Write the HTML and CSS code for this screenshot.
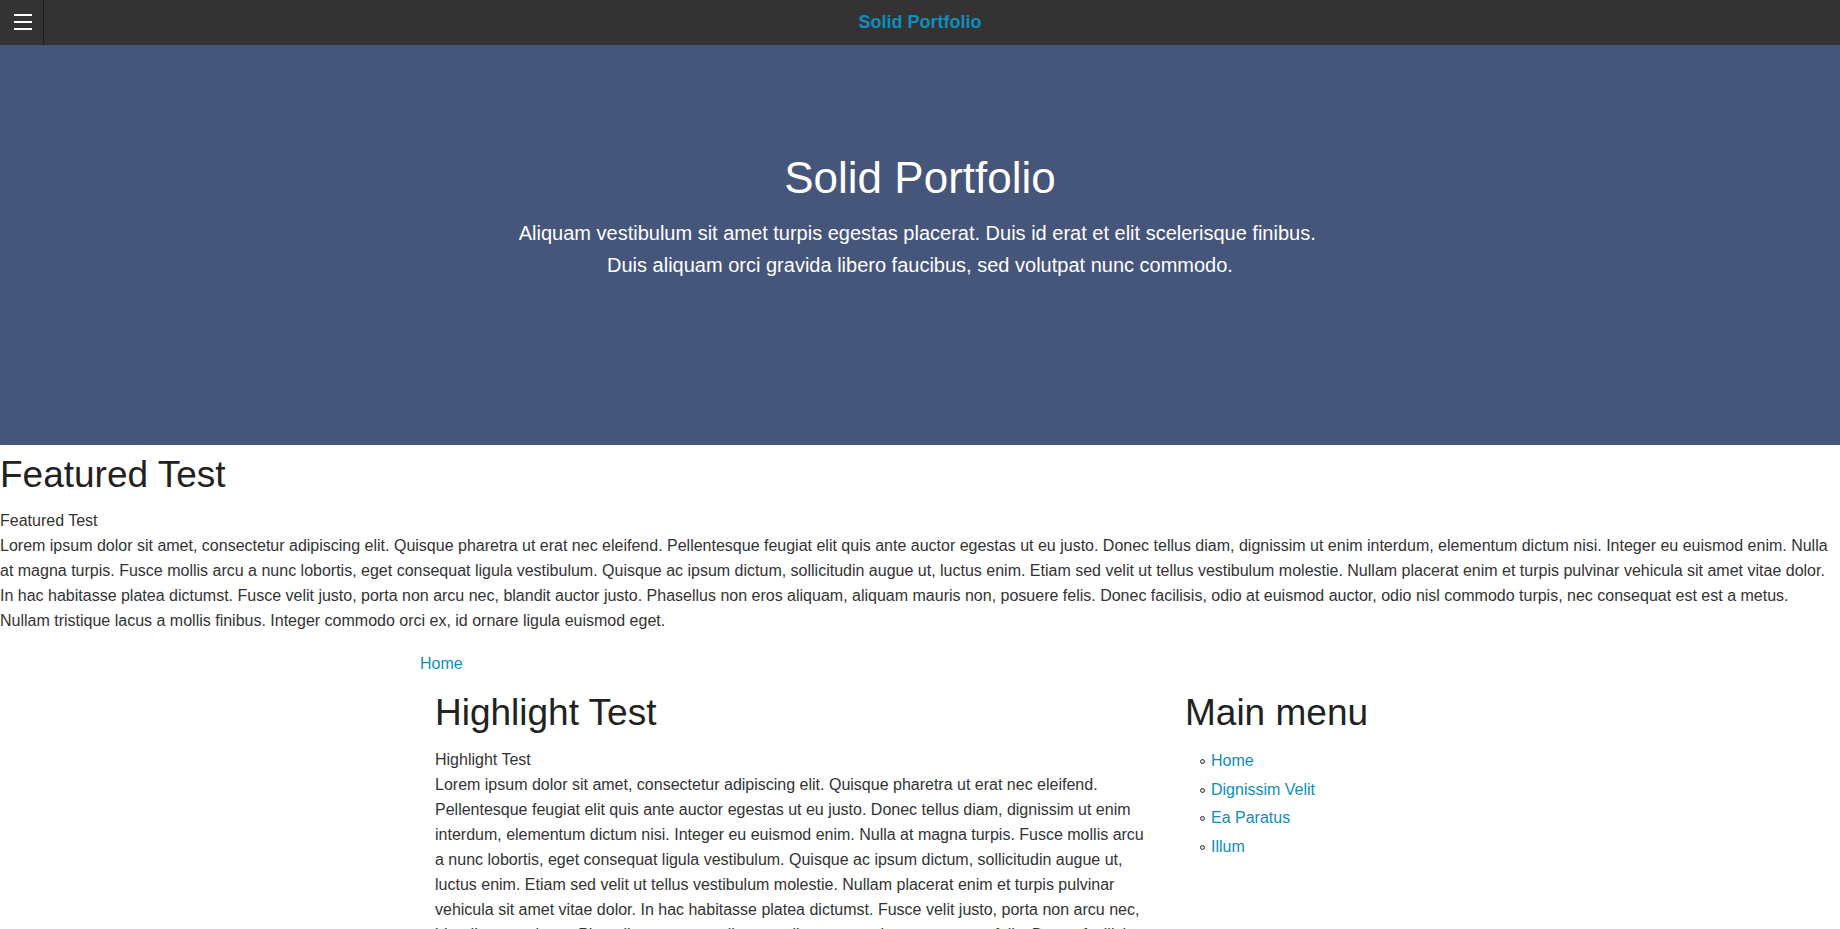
FILE: index.html
```html
<!DOCTYPE html>
<html lang="en">
<head>
<meta charset="utf-8">
<title>Solid Portfolio</title>
<link rel="stylesheet" href="styles.css">
</head>
<body>
<header class="topbar">
  <button class="menu-toggle" aria-label="Menu">
    <span class="bar"></span><span class="bar"></span><span class="bar"></span>
  </button>
  <a class="site-name" href="#">Solid Portfolio</a>
  <span class="spacer"></span>
</header>

<section class="hero">
  <h1 class="hero-title">Solid Portfolio</h1>
  <p class="hero-text">Aliquam vestibulum sit amet turpis egestas placerat. Duis id erat et elit scelerisque finibus.&nbsp;<br>Duis aliquam orci gravida libero faucibus, sed volutpat nunc commodo.</p>
</section>

<section class="featured">
  <h2 class="block-title featured-title">Featured Test</h2>
  <div class="field">Featured Test</div>
  <p class="body-text">Lorem ipsum dolor sit amet, consectetur adipiscing elit. Quisque pharetra ut erat nec eleifend. Pellentesque feugiat elit quis ante auctor egestas ut eu justo. Donec tellus diam, dignissim ut enim interdum, elementum dictum nisi. Integer eu euismod enim. Nulla at magna turpis. Fusce mollis arcu a nunc lobortis, eget consequat ligula vestibulum. Quisque ac ipsum dictum, sollicitudin augue ut, luctus enim. Etiam sed velit ut tellus vestibulum molestie. Nullam placerat enim et turpis pulvinar vehicula sit amet vitae dolor. In hac habitasse platea dictumst. Fusce velit justo, porta non arcu nec, blandit auctor justo. Phasellus non eros aliquam, aliquam mauris non, posuere felis. Donec facilisis, odio at euismod auctor, odio nisl commodo turpis, nec consequat est est a metus. Nullam tristique lacus a mollis finibus. Integer commodo orci ex, id ornare ligula euismod eget.</p>
</section>

<div class="container">
  <nav class="breadcrumb"><a href="#">Home</a></nav>
  <div class="layout">
    <main class="main-col">
      <h2 class="block-title col-title">Highlight Test</h2>
      <div class="field">Highlight Test</div>
      <p class="body-text">Lorem ipsum dolor sit amet, consectetur adipiscing elit. Quisque pharetra ut erat nec eleifend. Pellentesque feugiat elit quis ante auctor egestas ut eu justo. Donec tellus diam, dignissim ut enim interdum, elementum dictum nisi. Integer eu euismod enim. Nulla at magna turpis. Fusce mollis arcu a nunc lobortis, eget consequat ligula vestibulum. Quisque ac ipsum dictum, sollicitudin augue ut, luctus enim. Etiam sed velit ut tellus vestibulum molestie. Nullam placerat enim et turpis pulvinar vehicula sit amet vitae dolor. In hac habitasse platea dictumst. Fusce velit justo, porta non arcu nec, blandit auctor justo. Phasellus non eros aliquam, aliquam mauris non, posuere felis. Donec facilisis, odio at euismod auctor, odio nisl commodo turpis, nec consequat est est a metus. Nullam tristique lacus a mollis finibus. Integer commodo orci ex, id ornare ligula euismod eget.</p>
    </main>
    <aside class="side-col">
      <h2 class="block-title col-title">Main menu</h2>
      <ul class="menu">
        <li><a href="#">Home</a></li>
        <li><a href="#">Dignissim Velit</a></li>
        <li><a href="#">Ea Paratus</a></li>
        <li><a href="#">Illum</a></li>
      </ul>
    </aside>
  </div>
</div>
</body>
</html>
```

FILE: styles.css
```css
html, body {
  margin: 0;
  padding: 0;
}
body {
  font-family: "Liberation Sans", Arial, sans-serif;
  font-size: 16px;
  line-height: 25px;
  color: #333;
  background: #fff;
}
a {
  color: #0d8ebf;
  text-decoration: none;
}

/* top bar */
.topbar {
  display: grid;
  grid-template-columns: 44px 1fr 44px;
  align-items: center;
  height: 45px;
  background: #333333;
}
.menu-toggle {
  width: 44px;
  height: 45px;
  margin: 0;
  padding: 14px 12px 0 14px;
  border: 0;
  border-right: 1px solid #1c1c1c;
  background: transparent;
  display: flex;
  flex-direction: column;
  gap: 5px;
  align-items: flex-start;
  box-sizing: border-box;
  cursor: pointer;
}
.menu-toggle .bar {
  display: block;
  width: 18px;
  height: 2px;
  background: #fff;
}
.site-name {
  justify-self: center;
  font-size: 18px;
  font-weight: bold;
  line-height: 20px;
  margin-top: -1px;
  color: #0d8ebf;
}

/* hero */
.hero {
  height: 400px;
  box-sizing: border-box;
  padding-top: 107px;
  background: #46557a;
  color: #fff;
  text-align: center;
}
.hero-title {
  margin: 0;
  font-size: 44px;
  font-weight: normal;
  line-height: 52px;
}
.hero-text {
  margin: 13px 0 0;
  font-size: 20px;
  line-height: 32px;
}

/* blocks */
.block-title {
  font-size: 37px;
  font-weight: normal;
  line-height: 43px;
  color: #222;
  margin: 0 0 13px;
}
.featured-title {
  margin-top: 8px;
  margin-bottom: 12px;
}
.field {
  line-height: 25px;
}
.body-text {
  margin: 0;
}

.container {
  width: 1000px;
  margin: 18px auto 0;
}
.breadcrumb {
  line-height: 25px;
}
.layout {
  display: grid;
  grid-template-columns: 750px 250px;
  margin-top: 15px;
}
.main-col,
.side-col {
  padding: 0 15px;
}
.menu {
  margin: 0;
  padding-left: 15px;
  list-style: none;
}
.menu li {
  line-height: 28.5px;
}
.menu li:first-child {
  margin-top: 3px;
}
.menu li::before {
  content: "";
  display: inline-block;
  width: 3px;
  height: 3px;
  border: 1px solid #333;
  border-radius: 50%;
  background: #ddd;
  margin-right: 6px;
  vertical-align: middle;
}
```
